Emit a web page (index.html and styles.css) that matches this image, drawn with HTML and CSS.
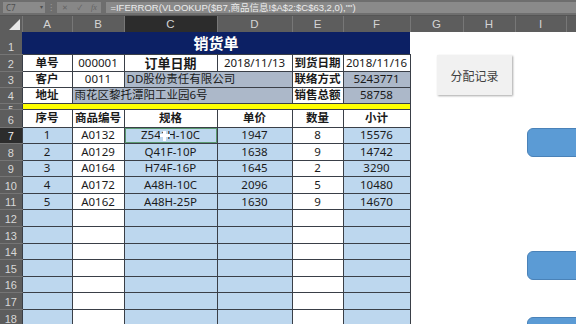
FILE: index.html
```html
<!DOCTYPE html>
<html>
<head>
    <meta charset="utf-8">
    <title>销货单</title>
    <link rel="stylesheet" href="styles.css">
</head>
<body>
    <div class="formula-bar">
        <div class="name-box"><span>C7</span><span class="caret">▾</span></div>
        <span class="dots">⁝</span>
        <div class="fx-box"><span>✕</span><span>✓</span><span class="fx">fx</span></div>
        <div class="formula">=IFERROR(VLOOKUP($B7,商品信息!$A$2:$C$63,2,0),"")</div>
    </div>

    <div class="sheet">
        <table class="grid">
            <colgroup>
                <col class="w-head">
                <col class="w-a"><col class="w-b"><col class="w-c"><col class="w-d">
                <col class="w-e"><col class="w-f"><col class="w-g"><col class="w-h">
                <col class="w-i"><col class="w-j">
            </colgroup>
            <tr class="col-heads">
                <th class="corner"><span class="tri"></span></th>
                <th>A</th><th>B</th><th class="sel">C</th><th>D</th><th>E</th>
                <th>F</th><th>G</th><th>H</th><th>I</th><th></th>
            </tr>
            <tr class="r-title">
                <th class="rh">1</th>
                <td colspan="6" class="title">销货单</td>
                <td></td><td></td><td></td><td></td>
            </tr>
            <tr class="r17">
                <th class="rh">2</th>
                <td class="c lbl">单号</td>
                <td class="c">000001</td>
                <td class="c lbl big">订单日期</td>
                <td class="c">2018/11/13</td>
                <td class="c lbl">到货日期</td>
                <td class="c">2018/11/16</td>
                <td></td><td></td><td></td><td></td>
            </tr>
            <tr class="r16">
                <th class="rh">3</th>
                <td class="c lbl">客户</td>
                <td class="c">0011</td>
                <td colspan="2" class="c grey left">DD股份责任有限公司</td>
                <td class="c lbl">联络方式</td>
                <td class="c grey">5243771</td>
                <td></td><td></td><td></td><td></td>
            </tr>
            <tr class="r16">
                <th class="rh">4</th>
                <td class="c lbl">地址</td>
                <td colspan="3" class="c grey left">雨花区黎托潭阳工业园6号</td>
                <td class="c lbl">销售总额</td>
                <td class="c grey">58758</td>
                <td></td><td></td><td></td><td></td>
            </tr>
            <tr class="r-thin">
                <th class="rh"><div class="clip">5</div></th>
                <td colspan="6" class="c yellow"></td>
                <td></td><td></td><td></td><td></td>
            </tr>
            <tr class="r18">
                <th class="rh">6</th>
                <td class="c lbl">序号</td>
                <td class="c lbl">商品编号</td>
                <td class="c lbl">规格</td>
                <td class="c lbl">单价</td>
                <td class="c lbl">数量</td>
                <td class="c lbl">小计</td>
                <td></td><td></td><td></td><td></td>
            </tr>
            <tr class="r-row">
                <th class="rh sel">7</th>
                <td class="c blue">1</td><td class="c">A0132</td>
                <td class="c blue active">Z541H-10C<span class="cursor"></span></td>
                <td class="c blue">1947</td><td class="c">8</td><td class="c blue">15576</td>
                <td></td><td></td><td></td><td></td>
            </tr>
            <tr class="r-row">
                <th class="rh">8</th>
                <td class="c blue">2</td><td class="c">A0129</td><td class="c blue">Q41F-10P</td>
                <td class="c blue">1638</td><td class="c">9</td><td class="c blue">14742</td>
                <td></td><td></td><td></td><td></td>
            </tr>
            <tr class="r-row">
                <th class="rh">9</th>
                <td class="c blue">3</td><td class="c">A0164</td><td class="c blue">H74F-16P</td>
                <td class="c blue">1645</td><td class="c">2</td><td class="c blue">3290</td>
                <td></td><td></td><td></td><td></td>
            </tr>
            <tr class="r-row">
                <th class="rh">10</th>
                <td class="c blue">4</td><td class="c">A0172</td><td class="c blue">A48H-10C</td>
                <td class="c blue">2096</td><td class="c">5</td><td class="c blue">10480</td>
                <td></td><td></td><td></td><td></td>
            </tr>
            <tr class="r-row">
                <th class="rh">11</th>
                <td class="c blue">5</td><td class="c">A0162</td><td class="c blue">A48H-25P</td>
                <td class="c blue">1630</td><td class="c">9</td><td class="c blue">14670</td>
                <td></td><td></td><td></td><td></td>
            </tr>
            <tr class="r-row"><th class="rh">12</th><td class="c blue"></td><td class="c"></td><td class="c blue"></td><td class="c blue"></td><td class="c"></td><td class="c blue"></td><td></td><td></td><td></td><td></td></tr>
            <tr class="r-row"><th class="rh">13</th><td class="c blue"></td><td class="c"></td><td class="c blue"></td><td class="c blue"></td><td class="c"></td><td class="c blue"></td><td></td><td></td><td></td><td></td></tr>
            <tr class="r-row"><th class="rh">14</th><td class="c blue"></td><td class="c"></td><td class="c blue"></td><td class="c blue"></td><td class="c"></td><td class="c blue"></td><td></td><td></td><td></td><td></td></tr>
            <tr class="r-row"><th class="rh">15</th><td class="c blue"></td><td class="c"></td><td class="c blue"></td><td class="c blue"></td><td class="c"></td><td class="c blue"></td><td></td><td></td><td></td><td></td></tr>
            <tr class="r-row"><th class="rh">16</th><td class="c blue"></td><td class="c"></td><td class="c blue"></td><td class="c blue"></td><td class="c"></td><td class="c blue"></td><td></td><td></td><td></td><td></td></tr>
            <tr class="r-row"><th class="rh">17</th><td class="c blue"></td><td class="c"></td><td class="c blue"></td><td class="c blue"></td><td class="c"></td><td class="c blue"></td><td></td><td></td><td></td><td></td></tr>
            <tr class="r-row"><th class="rh">18</th><td class="c blue"></td><td class="c"></td><td class="c blue"></td><td class="c blue"></td><td class="c"></td><td class="c blue"></td><td></td><td></td><td></td><td></td></tr>
        </table>

        <!-- floating shapes on the sheet -->
        <button class="btn-alloc">分配记录</button>
        <div class="shape shape-1"></div>
        <div class="shape shape-2"></div>
        <div class="shape shape-3"></div>
    </div>
</body>
</html>
```

FILE: styles.css
```css
body {
    margin: 0;
    background-color: #fff;
    font-family: "Noto Sans", "Noto Sans CJK SC", sans-serif;
    font-size: 11.5px;
    overflow: hidden;
}

/* formula bar */
.formula-bar {
    height: 16px;
    background-color: #6e6e6e;
    display: flex;
    align-items: center;
    gap: 5px;
    padding-left: 3px;
    box-sizing: border-box;
    border-bottom: 1px solid #555;
}

.name-box {
    width: 42px;
    height: 11px;
    background-color: #8a8a8a;
    color: #4e4e4e;
    font-size: 8px;
    line-height: 11px;
    display: flex;
    justify-content: space-between;
    padding: 0 2px 0 3px;
    box-sizing: border-box;
}

.caret {
    font-size: 6px;
}

.dots {
    color: #9a9a9a;
    font-size: 9px;
}

.fx-box {
    width: 44px;
    height: 11px;
    background-color: #878787;
    color: #626262;
    font-size: 7px;
    line-height: 11px;
    display: flex;
    justify-content: space-around;
}

.fx-box .fx {
    font-style: italic;
    font-family: "Liberation Serif", serif;
    font-size: 8px;
}

.formula {
    flex: 1;
    height: 11px;
    background-color: #8a8a8a;
    color: #ececec;
    font-family: "Liberation Sans", "Noto Sans CJK SC", sans-serif;
    font-size: 9.5px;
    line-height: 11px;
    padding-left: 4px;
    white-space: nowrap;
}

/* sheet grid */
.sheet {
    position: relative;
}

.grid {
    border-collapse: collapse;
    table-layout: fixed;
    width: 610px;
}

.w-head { width: 22px; }
.w-a { width: 50px; }
.w-b { width: 52px; }
.w-c { width: 93px; }
.w-d { width: 75px; }
.w-e { width: 51px; }
.w-f { width: 67px; }
.w-g { width: 53px; }
.w-h { width: 52px; }
.w-i { width: 51px; }
.w-j { width: 44px; }

.grid td,
.grid th {
    padding: 0;
    line-height: 14px;
    white-space: nowrap;
    overflow: hidden;
    text-align: center;
}

.col-heads {
    height: 16px;
}

.col-heads th {
    background-color: #5d5d5d;
    color: #d4d4d4;
    font-family: "Liberation Sans", sans-serif;
    font-weight: normal;
    font-size: 11.5px;
    border-right: 1px solid #777;
}

.col-heads th.sel {
    background-color: #2c2c2c;
}

.corner {
    position: relative;
}

.tri {
    position: absolute;
    right: 2px;
    bottom: 2px;
    width: 0;
    height: 0;
    border-left: 11px solid transparent;
    border-bottom: 11px solid #e8e8e8;
}

.rh {
    background-color: #5d5d5d;
    color: #d8d8d8;
    font-family: "Liberation Sans", sans-serif;
    font-weight: normal;
    font-size: 11px;
    border-bottom: 1px solid #757575;
    vertical-align: bottom;
}

.rh.sel {
    background-color: #2c2c2c;
    color: #f0f0f0;
}

.clip {
    height: 5px;
    overflow: hidden;
    line-height: 10px;
    font-size: 9px;
}

.r-title { height: 22px; }
.r17 { height: 17px; }
.r16 { height: 16px; }
.r18 { height: 18px; }
.r-row { height: 16.6px; }
.r-thin { height: 6px; }

.title {
    background-color: #0c2064;
    color: #fff;
    font-weight: bold;
    font-size: 15px;
    vertical-align: middle;
}

.c {
    border: 1px solid #3a3f47;
    color: #1a1a1a;
    background-color: #fff;
}

.lbl {
    font-weight: bold;
    font-size: 11.5px;
}

.big {
    font-size: 13px;
}

.grey {
    background-color: #acb8c9;
}

.blue {
    background-color: #bdd7ee;
}

.yellow {
    background-color: #ffff00;
    font-size: 0;
    line-height: 0;
}

.left {
    text-align: left !important;
    padding-left: 2px !important;
}

.active {
    position: relative;
    box-shadow: inset 0 0 0 1px #5a9a72;
}

.cursor {
    position: absolute;
    left: 35px;
    top: 3px;
    width: 10px;
    height: 10px;
    background:
        linear-gradient(#fff, #fff) center / 3px 10px no-repeat,
        linear-gradient(#fff, #fff) center / 10px 3px no-repeat;
    filter: drop-shadow(0 0 0.6px #000) drop-shadow(0 0 0.4px #000);
}

/* floating shapes */
.btn-alloc {
    position: absolute;
    left: 437px;
    top: 39px;
    width: 75px;
    height: 40px;
    background-color: #f1f1f1;
    color: #404040;
    border: none;
    box-shadow: 1px 1px 2px rgba(0, 0, 0, 0.35);
    font-family: "Noto Sans CJK SC", sans-serif;
    font-size: 12px;
    padding: 0;
}

.shape {
    position: absolute;
    left: 527px;
    width: 80px;
    height: 29px;
    background-color: #5b9bd5;
    border: 1px solid #4a82b8;
    border-radius: 6px;
    box-sizing: border-box;
}

.shape-1 { top: 112px; }
.shape-2 { top: 235px; }
.shape-3 { top: 301px; }
```
